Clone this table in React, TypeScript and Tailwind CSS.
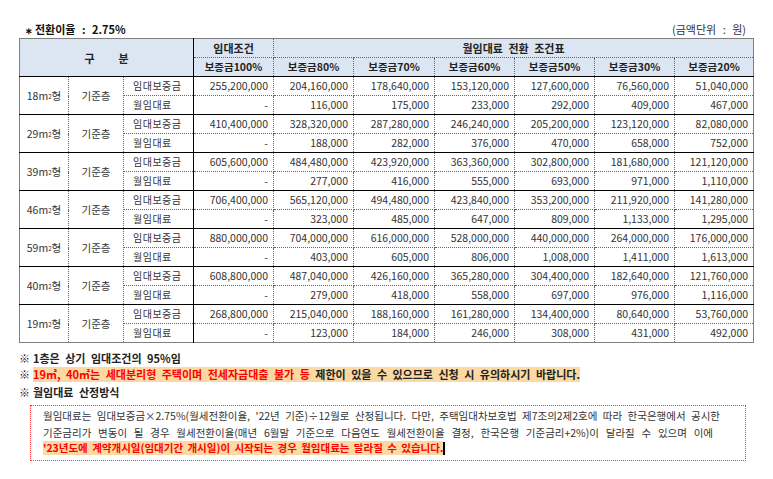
import React from "react";

type Group = { name: string; dep: string[]; rent: string[] };

const groups: Group[] = [
  {
    name: "18",
    dep: ["255,200,000", "204,160,000", "178,640,000", "153,120,000", "127,600,000", "76,560,000", "51,040,000"],
    rent: ["-", "116,000", "175,000", "233,000", "292,000", "409,000", "467,000"],
  },
  {
    name: "29",
    dep: ["410,400,000", "328,320,000", "287,280,000", "246,240,000", "205,200,000", "123,120,000", "82,080,000"],
    rent: ["-", "188,000", "282,000", "376,000", "470,000", "658,000", "752,000"],
  },
  {
    name: "39",
    dep: ["605,600,000", "484,480,000", "423,920,000", "363,360,000", "302,800,000", "181,680,000", "121,120,000"],
    rent: ["-", "277,000", "416,000", "555,000", "693,000", "971,000", "1,110,000"],
  },
  {
    name: "46",
    dep: ["706,400,000", "565,120,000", "494,480,000", "423,840,000", "353,200,000", "211,920,000", "141,280,000"],
    rent: ["-", "323,000", "485,000", "647,000", "809,000", "1,133,000", "1,295,000"],
  },
  {
    name: "59",
    dep: ["880,000,000", "704,000,000", "616,000,000", "528,000,000", "440,000,000", "264,000,000", "176,000,000"],
    rent: ["-", "403,000", "605,000", "806,000", "1,008,000", "1,411,000", "1,613,000"],
  },
  {
    name: "40",
    dep: ["608,800,000", "487,040,000", "426,160,000", "365,280,000", "304,400,000", "182,640,000", "121,760,000"],
    rent: ["-", "279,000", "418,000", "558,000", "697,000", "976,000", "1,116,000"],
  },
  {
    name: "19",
    dep: ["268,800,000", "215,040,000", "188,160,000", "161,280,000", "134,400,000", "80,640,000", "53,760,000"],
    rent: ["-", "123,000", "184,000", "246,000", "308,000", "431,000", "492,000"],
  },
];

const heads = ["보증금100%", "보증금80%", "보증금70%", "보증금60%", "보증금50%", "보증금30%", "보증금20%"];

const cell = "border border-dotted border-[#666] p-0 h-[19px] leading-[18px]";
const num = `${cell} text-right pr-[5px] text-[10.5px] text-[#333]`;

export default function App() {
  return (
    <div
      className="w-[773px] h-[479px] bg-white text-[#222] overflow-hidden"
      style={{ fontFamily: '"Noto Sans CJK KR", "Noto Sans", sans-serif' }}
    >
      <div className="flex justify-between items-center h-[16px] mt-[21px] pl-[25px] pr-[27px] text-[11px]">
        <span className="font-bold text-[#111] [word-spacing:4px]">
          <span className="text-[9px] mr-[2px]">∗</span>전환이율 : 2.75%
        </span>
        <span className="text-[#333] [word-spacing:4px]">(금액단위 : 원)</span>
      </div>

      <table className="ml-[19px] mt-[1px] w-[734px] table-fixed border-collapse border border-[#808080]">
        <colgroup>
          <col className="w-[49px]" />
          <col className="w-[55px]" />
          <col className="w-[70px] border-r border-black" />
          <col className="w-[80px]" />
          <col className="w-[80px]" />
          <col className="w-[81px]" />
          <col className="w-[80px]" />
          <col className="w-[80px]" />
          <col className="w-[80px]" />
          <col className="w-[79px]" />
        </colgroup>
        <thead className="bg-[#dce6f2] border-b border-black">
          <tr>
            <th rowSpan={2} colSpan={3} className={`${cell} text-[11px] font-bold text-center`}>
              <span className="inline-flex gap-[24px]">
                <span>구</span>
                <span>분</span>
              </span>
            </th>
            <th className={`${cell} text-[11px] font-bold text-center`}>임대조건</th>
            <th colSpan={6} className={`${cell} text-[11px] font-bold text-center`}>
              <span className="[word-spacing:3px]">월임대료 전환 조건표</span>
            </th>
          </tr>
          <tr>
            {heads.map((h) => (
              <th key={h} className={`${cell} text-[10.5px] font-bold text-center`}>
                {h}
              </th>
            ))}
          </tr>
        </thead>
        {groups.map((g) => (
          <tbody key={g.name} className="border-t border-black">
            <tr>
              <td rowSpan={2} className={`${cell} text-center text-[10.5px] text-[#333]`}>
                {g.name}m<sup className="text-[6px] relative top-[-1px]">2</sup>형
              </td>
              <td rowSpan={2} className={`${cell} text-center text-[10.5px] text-[#333]`}>
                기준층
              </td>
              <td className={`${cell} pl-[9px] text-[10px] text-[#333] tracking-[0.5px]`}>임대보증금</td>
              {g.dep.map((v, i) => (
                <td key={i} className={num}>
                  {v}
                </td>
              ))}
            </tr>
            <tr>
              <td className={`${cell} pl-[9px] text-[10px] text-[#333] tracking-[0.5px]`}>월임대료</td>
              {g.rent.map((v, i) => (
                <td key={i} className={num}>
                  {v}
                </td>
              ))}
            </tr>
          </tbody>
        ))}
      </table>

      <div className="mt-[7px] ml-[19px] text-[11px] font-bold text-[#222] leading-[17px]">
        <div className="flex">
          <span className="w-[14px]">※</span>
          <span className="[word-spacing:3px]">1층은 상기 임대조건의 95%임</span>
        </div>
        <div className="flex mt-[-1px]">
          <span className="w-[14px]">※</span>
          <span className="bg-[#fad9a3] leading-[14px] my-[1px] [word-spacing:3px]">
            <span className="text-[#ff0000]">19㎡, 40㎡는 세대분리형 주택이며 전세자금대출 불가 등</span> 제한이 있을 수 있으므로 신청 시 유의하시기 바랍니다.
          </span>
        </div>
        <div className="flex mt-[1px]">
          <span className="w-[14px]">※</span>
          <span className="[word-spacing:3px]">월임대료 산정방식</span>
        </div>
      </div>

      <div className="ml-[30px] mt-[4px] w-[716px] h-[56px] border border-dotted border-[#ff3333] pl-[12px] pt-[1px] text-[10.5px] leading-[17px] text-[#333]">
        <div className="w-[677px] text-justify [text-align-last:justify]">
          월임대료는 임대보증금×2.75%(월세전환이율, '22년 기준)÷12월로 산정됩니다. 다만, 주택임대차보호법 제7조의2제2호에 따라 한국은행에서 공시한
        </div>
        <div className="w-[670px] text-justify [text-align-last:justify]">
          기준금리가 변동이 될 경우 월세전환이율(매년 6월말 기준으로 다음연도 월세전환이율 결정, 한국은행 기준금리+2%)이 달라질 수 있으며 이에
        </div>
        <div className="flex items-center">
          <span className="bg-[#fad9a3] text-[#ff0000] font-bold leading-[14px] [word-spacing:2px]">
            '23년도에 계약개시일(임대기간 개시일)이 시작되는 경우 월임대료는 달라질 수 있습니다.
          </span>
          <span className="inline-block w-[2px] h-[13px] bg-black" />
        </div>
      </div>
    </div>
  );
}
